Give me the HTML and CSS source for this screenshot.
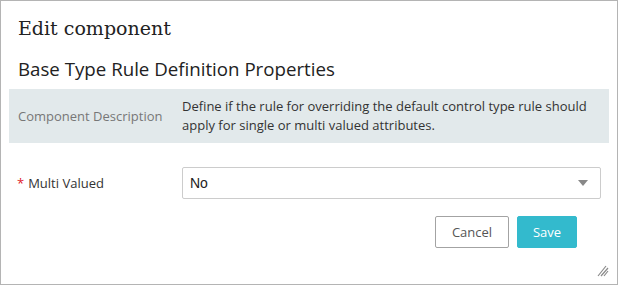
FILE: index.html
```html
<!DOCTYPE html>
<html lang="en">

<head>
  <meta charset="UTF-8" />
  <meta name="viewport" content="width=device-width, initial-scale=1.0" />
  <title>Edit component</title>
  <link rel="stylesheet" href="styles.css">
</head>

<body>
  <section class="dialog">
    <h2 class="dialog-title">Edit component</h2>
    <div class="dialog-body">
      <h3 class="section-title">Base Type Rule Definition Properties</h3>
      <div class="info-panel">
        <div class="info-label">Component Description</div>
        <div class="info-text">Define if the rule for overriding the default control type rule should apply for single or multi valued attributes.</div>
      </div>
      <div class="form-row">
        <label class="field-label"><span class="required">*</span>Multi Valued</label>
        <div class="select">
          <span class="select-value">No</span>
          <span class="caret"></span>
        </div>
      </div>
      <div class="actions">
        <button type="button" class="btn btn-cancel">Cancel</button>
        <button type="button" class="btn btn-save">Save</button>
      </div>
    </div>
    <svg class="grip" width="12" height="13" viewBox="0 0 12 13">
      <path d="M1 12 L9 2 M4 12 L11 4 M7 12 L11 7" stroke="#8a8a8a" stroke-width="1.2" fill="none" />
    </svg>
  </section>
</body>

</html>
```

FILE: styles.css
```css
:root {
  --border: #b4b4b4;
  --panel: #e2e9eb;
  --primary-color: #33bacd;
  --text: #333333;
}

* {
  box-sizing: border-box;
}

body {
  margin: 0;
  font-family: "Open Sans", sans-serif;
  color: var(--text);
  background: #ffffff;
}

.dialog {
  position: relative;
  width: 618px;
  height: 285px;
  border: 1px solid var(--border);
  background: #ffffff;
}

.dialog-title {
  margin: 0;
  padding: 15px 17px 0;
  font-family: "DejaVu Serif", serif;
  font-weight: normal;
  font-size: 19px;
  line-height: 24px;
  color: #222222;
}

.dialog-body {
  padding: 0 8px;
}

.section-title {
  margin: 17px 0 8px;
  padding-left: 9px;
  font-weight: normal;
  font-size: 18.7px;
  line-height: 24px;
  color: #222222;
}

.info-panel {
  display: flex;
  align-items: center;
  width: 600px;
  padding: 8px 0;
  background: var(--panel);
  font-size: 13px;
  line-height: 19px;
}

.info-label {
  flex: 0 0 173px;
  padding-left: 9px;
  color: #777777;
}

.info-text {
  flex: 1;
  padding-right: 14px;
}

.form-row {
  display: flex;
  align-items: center;
  margin-top: 24px;
}

.field-label {
  flex: 0 0 173px;
  padding-left: 8px;
  font-size: 13px;
  color: var(--text);
}

.required {
  color: #e0202a;
  margin-right: 4px;
}

.select {
  display: flex;
  align-items: center;
  justify-content: space-between;
  width: 419px;
  height: 32px;
  padding: 0 12px 0 7px;
  border: 1px solid #cccccc;
  border-radius: 2px;
  font-family: "Liberation Sans", Arial, sans-serif;
  font-size: 14px;
  color: #222222;
}

.caret {
  width: 0;
  height: 0;
  border-left: 5px solid transparent;
  border-right: 5px solid transparent;
  border-top: 6px solid #888888;
}

.actions {
  display: flex;
  justify-content: flex-end;
  gap: 8px;
  margin-top: 17px;
  padding-right: 32px;
}

.btn {
  height: 32px;
  border-radius: 2px;
  font-family: "Open Sans", sans-serif;
  font-size: 13px;
  cursor: pointer;
}

.btn-cancel {
  width: 74px;
  background: #ffffff;
  border: 1px solid #a3a3a3;
  color: #555555;
}

.btn-save {
  width: 60px;
  background: var(--primary-color);
  border: 1px solid var(--primary-color);
  color: #ffffff;
}

.grip {
  position: absolute;
  right: 8px;
  bottom: 7px;
}
```
